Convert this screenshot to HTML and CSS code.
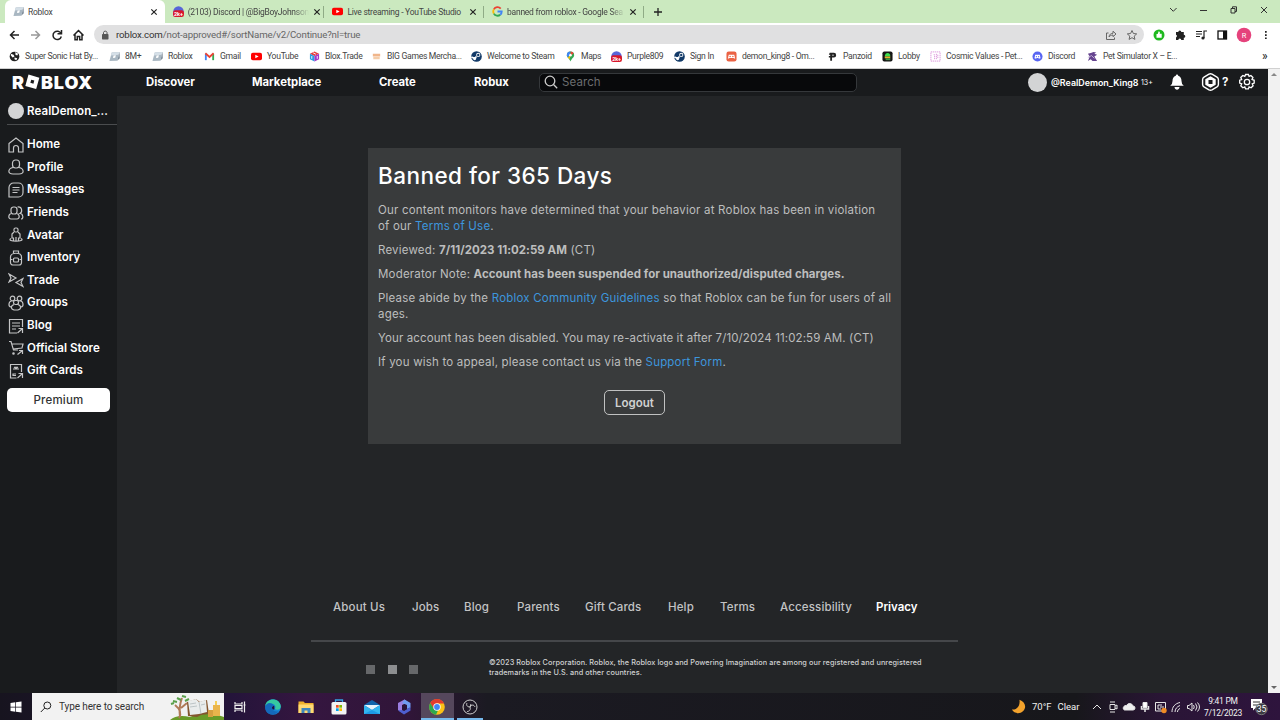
FILE: index.html
```
<!DOCTYPE html>
<html lang="en">
<head>
    <meta charset="utf-8">
    <title>Roblox</title>
    <link rel="stylesheet" href="styles.css">
</head>
<body>
    <!-- shared icons -->
    <svg class="defs">
        <defs>
            <symbol id="cube" viewBox="0 0 12 12"><path d="M3 1.5 11.5 1 9 10.5.5 11Z" fill="#a9b7c2"/><path d="M3 1.5 11.5 1 10.5 4 2 5Z" fill="#d5dfe7"/><path d="m5 5 2.5-.3-.7 2.6-2.5.2Z" fill="#fff"/><path d="m9 10.5 2.5-9.5.3 7Z" fill="#7d8b98"/></symbol>
            <symbol id="yt" viewBox="0 0 12 12"><rect y="1.8" width="12" height="8.4" rx="2" fill="#f00"/><path d="m4.7 4 3.6 2-3.6 2Z" fill="#fff"/></symbol>
            <symbol id="disc2k" viewBox="0 0 12 12"><circle cx="6" cy="6" r="5.7" fill="#5865d8"/><rect y="4.5" width="12" height="7.5" rx="2.5" fill="#d8162b"/><text x="6" y="10.4" font-size="6" font-weight="700" text-anchor="middle" fill="#fff">2k+</text></symbol>
            <symbol id="steam" viewBox="0 0 12 12"><circle cx="6" cy="6" r="5.8" fill="#123a68"/><path d="M.3 6.5 4 8 6 6" stroke="#fff" stroke-width="1.8" fill="none"/><circle cx="4" cy="8.3" r="1.7" fill="#fff"/><circle cx="7.9" cy="4.3" r="2.3" fill="#fff"/><circle cx="7.9" cy="4.3" r="1.3" fill="#123a68"/></symbol>
            <symbol id="x" viewBox="0 0 8 8"><path d="m1.3 1.3 5.4 5.4m0-5.4L1.3 6.7" stroke="#222" stroke-width="1.2"/></symbol>
        </defs>
    </svg>

    <div class="tabs">
        <div class="tab active"><svg><use href="#cube"/></svg><span>Roblox</span><svg class="x"><use href="#x"/></svg></div>
        <div class="tab sep"><svg><use href="#disc2k"/></svg><span class="fade">(2103) Discord | @BigBoyJohnson</span><svg class="x"><use href="#x"/></svg></div>
        <div class="tab sep"><svg><use href="#yt"/></svg><span>Live streaming - YouTube Studio</span><svg class="x"><use href="#x"/></svg></div>
        <div class="tab sep"><svg viewBox="0 0 12 12" fill="none" stroke-width="2"><path d="M9.5 2.8A4.6 4.6 0 0 0 2 3.7" stroke="#ea4335"/><path d="M2 3.7a4.6 4.6 0 0 0 0 4.6" stroke="#fbbc05"/><path d="M2 8.3a4.6 4.6 0 0 0 7 1.2" stroke="#34a853"/><path d="M9 9.5A4.5 4.5 0 0 0 10.6 6H6" stroke="#4285f4"/></svg><span class="fade">banned from roblox - Google Sea</span><svg class="x"><use href="#x"/></svg></div>
        <svg class="plus" viewBox="0 0 10 10"><path d="M5 1v8M1 5h8" stroke="#222" stroke-width="1.3"/></svg>
        <svg class="win" viewBox="0 0 104 10" fill="none" stroke="#333"><path d="m1 3 3.3 3.3L7.6 3"/><path d="M31 5.5h7"/><path d="M62 3.5h4V8h-4zM63.5 3V1.8h4V6.5H66"/><path d="m92 2 6 6m0-6-6 6"/></svg>
    </div>

    <div class="toolbar">
        <svg class="navs" viewBox="0 0 78 14" fill="none" stroke="#222" stroke-width="1.5"><path d="M10 7H1.5M5.5 3l-4 4 4 4"/><path d="M22 7h8.5M26.5 3l4 4-4 4" stroke="#999"/><path d="M52 5.5A4.2 4.2 0 1 0 52.3 8.5M52.5 2v3.8h-4"/><path d="m64.5 7.5 5-5 5 5M66 6.5v5.3h2.3V8.5h2.4v3.3H73V6.5"/></svg>
        <div class="url">
            <svg viewBox="0 0 10 12" class="lock"><rect x="2" y="5" width="6.5" height="5.5" rx=".7" fill="#555"/><path d="M3.5 5V3.5a1.8 1.8 0 0 1 3.5 0V5" fill="none" stroke="#555"/></svg>
            <span class="address">roblox.com<i>/not-approved#/sortName/v2/Continue?nl=true</i></span>
            <svg class="share" viewBox="0 0 34 12" fill="none" stroke="#666"><path d="M3.5 4H1.5v6.5h8V8.5M4 8c.3-2.7 2-3.7 4-3.7V2.2L11 5 8 7.7V6C6.3 6 5 6.6 4 8Z"/><path d="m27 1.5 1.4 3 3.3.4-2.5 2.2.7 3.3-2.9-1.7-2.9 1.7.7-3.3-2.5-2.2 3.3-.4Z"/></svg>
        </div>
        <svg class="exts" viewBox="0 0 122 16"><circle cx="9" cy="8" r="5.5" fill="#1fb91f"/><path d="M6.5 7h1.2l1-2.8 1.2.8-.2 1.7h2v4H6.5Z" fill="#fff"/><path d="M26 5h2.3a1.5 1.5 0 0 1 3 0h2.5v2.7a1.5 1.5 0 0 1 0 3V13h-2.5a1.5 1.5 0 0 0-3 0H26v-2.5a1.5 1.5 0 0 0 0-2.8Z" fill="#222"/><path d="M46 4.5h6M46 7h6M46 9.5h4M54 11V4h3" stroke="#222" stroke-width="1.2" fill="none"/><circle cx="53" cy="11" r="1.6" fill="#222"/><rect x="68" y="4" width="8.5" height="8" fill="none" stroke="#111" stroke-width="1.3"/><path d="M73 4h3.5v8H73z" fill="#111"/><circle cx="94" cy="8" r="7.3" fill="#e5427c"/><text x="94" y="10.7" font-size="7.5" text-anchor="middle" fill="#fff">R</text><path d="M115 4h1.7v1.7H115zm0 3.2h1.7v1.7H115zm0 3.2h1.7v1.7H115z" fill="#222"/></svg>
    </div>

    <div class="bookmarks">
        <div><svg viewBox="0 0 12 12"><circle cx="6" cy="6" r="5.3" fill="#222"/><path d="m2 3 3 1 1 2-2 1-2-2Zm5-2 3 2-1 2-2-1Zm-1 6 3 1-1 2-2-1Z" fill="#fff"/></svg>Super Sonic Hat By...</div>
        <div><svg><use href="#cube"/></svg>8M+</div>
        <div><svg><use href="#cube"/></svg>Roblox</div>
        <div><svg viewBox="0 0 12 12" fill="none" stroke-width="2"><path d="M2 10V3" stroke="#4285f4"/><path d="M10 10V3" stroke="#34a853"/><path d="m1.5 2.5 4.5 4 4.5-4" stroke="#ea4335"/></svg>Gmail</div>
        <div><svg><use href="#yt"/></svg>YouTube</div>
        <div><svg viewBox="0 0 12 12"><path d="m6 .5 5 2.5-5 2.5L1 3Z" fill="#e83d3d"/><path d="m1 3 5 2.5V11.5L1 9Z" fill="#2d9be0"/><path d="m11 3-5 2.5V11.5L11 9Z" fill="#a438c8"/><path d="m4.5 2 3 1.5M3 5.5v3M9 5.5v3" stroke="#fff"/></svg>Blox.Trade</div>
        <div><svg viewBox="0 0 12 12"><rect x="2" y="3" width="8" height="3" fill="#f0b58a"/><rect x="2.5" y="6.5" width="7" height="2.5" fill="#f5cda9"/></svg>BIG Games Mercha...</div>
        <div><svg><use href="#steam"/></svg>Welcome to Steam</div>
        <div><svg viewBox="0 0 12 12"><path d="M6 .5a4 4 0 0 1 4 4C10 7 7 8 6 11.5 5 8 2 7 2 4.5a4 4 0 0 1 4-4Z" fill="#34a853"/><path d="M2 4.5A4 4 0 0 1 6 .5l-1 4-2 2.5Z" fill="#4285f4"/><path d="M6 .5a4 4 0 0 1 3.5 2L6.5 5Z" fill="#ea4335"/><path d="m3 7 3-2.5L5 9Z" fill="#fbbc05"/><circle cx="6" cy="4.5" r="1.4" fill="#fff"/></svg>Maps</div>
        <div><svg><use href="#disc2k"/></svg>Purple809</div>
        <div><svg><use href="#steam"/></svg>Sign In</div>
        <div><svg viewBox="0 0 12 12"><rect x=".5" y=".5" width="11" height="11" rx="2.5" fill="#ea6244"/><path d="M2 8.5 3 4h6l1 4.5-2-.8H4Z" fill="#fff"/><circle cx="4.5" cy="6" r=".8" fill="#ea6244"/><circle cx="7.5" cy="6" r=".8" fill="#ea6244"/></svg>demon_king8 - Om...</div>
        <div><svg viewBox="0 0 12 12"><path d="M3 2h4.5a2.5 2.5 0 0 1 0 5H5.5v3.5H3.5V7H2V5.5h1.5V4H2Z" fill="#222"/><path d="M5.5 4h2v1h-2z" fill="#fff"/></svg>Panzoid</div>
        <div><svg viewBox="0 0 12 12"><rect x=".5" y=".5" width="11" height="11" rx="2" fill="#151515"/><path d="M3 6c0-5 6-5 6-1v1Z" fill="#3fe04e"/><path d="M3 6h6v2H3z" fill="#e8b22c"/><path d="M4 8h5v2H4z" fill="#3c9c45"/></svg>Lobby</div>
        <div><svg viewBox="0 0 12 12" fill="none" stroke="#dc94dc" stroke-dasharray="1.5 .7"><path d="M1 1h10v10H1zM4 4h1v5M7 3v6M8.5 4v4"/></svg>Cosmic Values - Pet...</div>
        <div><svg viewBox="0 0 12 12"><circle cx="6" cy="6" r="5.5" fill="#5865f2"/><path d="M2.7 8 3.5 4h5l.8 4-1.8.5-.5-.8H5l-.5.8Z" fill="#fff"/><circle cx="4.8" cy="6.2" r=".7" fill="#5865f2"/><circle cx="7.2" cy="6.2" r=".7" fill="#5865f2"/></svg>Discord</div>
        <div><svg viewBox="0 0 12 12"><path d="M1 3 5 2l2-1 3 .5L8 3l3 1-3 2 3 5H6L4 9l-3 2 2-5Z" fill="#65448f"/><path d="m1 7 4-2 3 3" stroke="#c5b4da" fill="none"/></svg>Pet Simulator X – E...</div>
        <div class="more">»</div>
    </div>

    <div class="page">
        <div class="site">
            <header>
                <div class="logo"><span>R</span><svg viewBox="0 0 13 14"><path d="m3 .5 9.5 2.8-2.8 9.9L.2 10.5Z" fill="#fff"/><path d="m5.4 5 2.7.7-.8 2.8-2.7-.8Z" fill="#191b1d"/></svg><span>BLOX</span></div>
                <nav><a>Discover</a><a>Marketplace</a><a>Create</a><a>Robux</a></nav>
                <div class="search"><svg viewBox="0 0 14 14" fill="none" stroke="#ccc" stroke-width="1.3"><circle cx="6" cy="6" r="4.8"/><path d="m9.5 9.5 3.7 3.7"/></svg>Search</div>
                <i class="avatar"></i>
                <b class="handle">@RealDemon_King8</b><span class="age">13+</span>
                <svg class="tools" viewBox="0 0 90 20"><path d="M10 2.5a1.2 1.2 0 0 1 1.2 1.2c2.3.8 3.3 2.5 3.3 5.3l.6 3 1.7 1.7H3.2L4.9 12l.6-3c0-2.8 1-4.5 3.3-5.3A1.2 1.2 0 0 1 10 2.5ZM7.5 15h5c-.3 3.5-4.7 3.5-5 0Z" fill="#fff"/><path d="M42 2.2q1.5-.8 3 0l5 2.9q1.4.9 1.4 2.5v4.8q0 1.6-1.4 2.5l-5 2.9q-1.5.8-3 0l-5-2.9q-1.4-.9-1.4-2.5V7.6q0-1.6 1.4-2.5Z" fill="none" stroke="#fff" stroke-width="1.4"/><path d="m43.5 4.3 5.2 3v5.4l-5.2 3-5.2-3V7.3ZM41.5 8v4h4V8Z" fill="#fff" fill-rule="evenodd"/><text x="55" y="13.5" font-size="11.5" font-weight="700" fill="#fff">?</text><g fill="none" stroke="#fff" stroke-width="1.3"><circle cx="80" cy="10" r="2.7"/><path d="m78.6 2.5h2.8l.7 1.9 1.8-.9 2 2-.9 1.9 2.2.9v2.8l-2 .7.9 2-2 2-2-.9-.7 2h-2.8l-.8-2-2 .9-2-2 .9-2-2-.8v-2.8l2-.7-.9-2 2-2 2 .9Z"/></g></svg>
            </header>
            <div class="columns">
                <aside>
                    <div class="user"><i class="avatar"></i>RealDemon_...</div>
                    <ul>
                        <li><svg viewBox="0 0 16 16"><path d="M1 6.5 8 1l7 5.5V15h-4.5v-4a2.5 2.5 0 0 0-5 0v4H1Z"/></svg>Home</li>
                        <li><svg viewBox="0 0 16 16"><rect x="4.5" y="1" width="7" height="8" rx="3"/><path d="M5 8.5c-5 1-6 6.5 0 6.5h6c6 0 5-5.5 0-6.5"/></svg>Profile</li>
                        <li><svg viewBox="0 0 16 16"><path d="M1 15V5.5A4.5 4.5 0 0 1 5.5 1h5A4.5 4.5 0 0 1 15 5.5v5a4.5 4.5 0 0 1-4.5 4.5ZM4.5 5.5h7M4.5 8h7M4.5 10.5h5"/></svg>Messages</li>
                        <li><svg viewBox="0 0 16 16"><rect x="3" y="2" width="6" height="7" rx="2.5"/><path d="M3.5 8.5C0 9 0 14 3 14h6c3 0 3-5-.5-5.5M9.5 2c5-.5 5 5 2.5 6.5 3 0 4 5.5 1 5.5"/></svg>Friends</li>
                        <li><svg viewBox="0 0 16 16"><rect x="6" y="1" width="4" height="4" rx="1.5"/><path d="M6 5 4 7v4h1.5v3h5v-3H12V7l-2-2M8 10v4M3 11.5c-6 3.5 16 3.5 10 0"/></svg>Avatar</li>
                        <li><svg viewBox="0 0 16 16"><path d="M5.5 3V1h5v2M2.5 7c0-5 11-5 11 0v5.5a2.5 2.5 0 0 1-2.5 2.5H5a2.5 2.5 0 0 1-2.5-2.5ZM2 9.5h2.5m7 0H14"/><rect x="5.5" y="8" width="5" height="4" rx="1"/></svg>Inventory</li>
                        <li><svg viewBox="0 0 16 16"><path d="m1 2 7 4-7 4 2-4ZM15 6.5l-7 4 7 4-2-4Z"/></svg>Trade</li>
                        <li><svg viewBox="0 0 16 16"><circle cx="4.5" cy="3.5" r="2.3"/><circle cx="11.5" cy="3.5" r="2.3"/><rect x="5.5" y="5.5" width="5" height="4" rx="2"/><path d="M3.5 6c-3 .5-3.5 5.5-.5 6M12.5 6c3 .5 3.5 5.5.5 6M6 9.5c-4 1.5-3.5 5.5 2 5.5s6-4 2-5.5"/></svg>Groups</li>
                        <li><svg viewBox="0 0 16 16"><path d="M9 15H1.5V1.5h13V9M4 5h8M4 8h8M4 11h4M9.5 15l5-4.5M10.5 10.5h4V15"/></svg>Blog</li>
                        <li><svg viewBox="0 0 16 16"><path d="M1 1.5h2L5.5 10H10M4 4h11l-1 4-9 1M9.5 14.5l5-4M11 10.5h3.5V14"/><circle cx="5.5" cy="13.5" r=".7"/></svg>Official Store</li>
                        <li><svg viewBox="0 0 16 16"><path d="M8.5 15h-6V1.5h11V9M5 6h6M8 3.5V6M6 4l2 1.5L10 4M8 11H5v1.5h3M9.5 15l5-4.5M10.5 10.5h4V15"/></svg>Gift Cards</li>
                    </ul>
                    <button class="premium">Premium</button>
                </aside>
                <main>
                    <section class="notice">
                        <h1>Banned for 365 Days</h1>
                        <p>Our content monitors have determined that your behavior at Roblox has been in violation<br>of our <a>Terms of Use</a>.</p>
                        <p>Reviewed: <b>7/11/2023 11:02:59 AM</b> (CT)</p>
                        <p>Moderator Note: <b>Account has been suspended for unauthorized/disputed charges.</b></p>
                        <p>Please abide by the <a>Roblox Community Guidelines</a> so that Roblox can be fun for users of all<br>ages.</p>
                        <p class="tight">Your account has been disabled. You may re-activate it after 7/10/2024 11:02:59 AM. (CT)</p>
                        <p>If you wish to appeal, please contact us via the <a>Support Form</a>.</p>
                        <button class="logout">Logout</button>
                    </section>
                    <footer>
                        <nav><a>About Us</a><a>Jobs</a><a>Blog</a><a>Parents</a><a>Gift Cards</a><a>Help</a><a>Terms</a><a>Accessibility</a><a class="privacy">Privacy</a></nav>
                        <div class="legal">
                            <div class="dots"><i></i><i></i><i></i></div>
                            <p>©2023 Roblox Corporation. Roblox, the Roblox logo and Powering Imagination are among our registered and unregistered<br>trademarks in the U.S. and other countries.</p>
                        </div>
                    </footer>
                </main>
            </div>
        </div>
        <div class="scrollbar"><span class="up"></span><span class="down"></span></div>
    </div>

    <div class="taskbar">
        <svg class="start" viewBox="0 0 12 12"><path d="m.5 2 4.8-.7v4.4H.5ZM6 1.2 11.5.5v5.2H6ZM.5 6.4h4.8v4.4L.5 10ZM6 6.4h5.5v5.2L6 10.8Z" fill="#fff"/></svg>
        <div class="find">
            <svg class="glass" viewBox="0 0 12 12" fill="none" stroke="#222"><circle cx="7.3" cy="4.5" r="3.5"/><path d="M4.8 7 .8 11"/></svg>
            <span>Type here to search</span>
            <svg class="scene" viewBox="0 0 54 27"><path d="M0 27q7-6 20-3 15-7 34 0v3Z" fill="#6a9b28"/><path d="M9 25c3-5 1-9-4-13M10 24c-1-8 0-14 2-19M11 15l6-5" stroke="#b07a57" stroke-width="2" fill="none"/><path d="m1 11 3-1M3 8l4 1M7 5l4 2M12 3l4 1M15 8l4-2" stroke="#5aa04b" stroke-width="2"/><path d="m17 9 9-3 4 3 7-2 2 14-8 1-4 2-9-1Z" fill="#83552e"/><path d="m18 8 8-2 3 3 7-2 1 12-8 2-9 1Z" fill="#e9ecec"/><path d="m29 9 2 12M20 11l6-1M20 14l7-1M31 12l4-1" stroke="#a9b3b6" stroke-width=".7"/><rect x="43" y="12" width="7" height="11" fill="#eab54c"/><rect x="38" y="17" width="5" height="7" fill="#d6a040"/><path d="M46 12V8" stroke="#f4ce55" stroke-width="2"/></svg>
        </div>
        <div class="apps">
            <span><svg viewBox="0 0 16 16" fill="none" stroke="#eee" stroke-width="1.2"><path d="M3 3v2h7V3M3 13v-2h7v2M3 6.5h7v3H3zM12.5 2.5v11M11.5 6h2"/></svg></span>
            <span><svg viewBox="0 0 16 16"><circle cx="8" cy="8" r="7.8" fill="#1784d3"/><path d="M.2 7C1-1 14-2 15.8 7c.2 4-4 4.5-6 3 2-3-1-6-4-5C3 5 1 6 .2 7Z" fill="#36c9a0"/><path d="M.2 8C1 3 8 3 8.5 7 6 8 7 13 13.5 12.5 10 17 0 17 .2 8Z" fill="#1469bb"/><path d="M9 6.5c1 2-.3 2.5.6 3.5-1 1.5-3 0-2.5-2Z" fill="#24113a"/></svg></span>
            <span><svg viewBox="0 0 16 16"><path d="M.5 2.5h5l1.5 1.5h8.5v10H.5Z" fill="#efb12c"/><path d="M.5 5.5h15v8.5H.5Z" fill="#ffda74"/><path d="M3.5 14V9h9v5h-3v-2.5h-3V14Z" fill="#3e87bd"/></svg></span>
            <span><svg viewBox="0 0 16 16"><path d="M4.5 4V1h7v3" fill="none" stroke="#35a4e4" stroke-width="1.3"/><rect x=".5" y="3" width="15" height="12.5" rx="1.5" fill="#f3f3f3"/><path d="M5 6h2.7v2.7H5Z" fill="#f25022"/><path d="M8.3 6H11v2.7H8.3Z" fill="#7fba00"/><path d="M5 9.3h2.7V12H5Z" fill="#00a4ef"/><path d="M8.3 9.3H11V12H8.3Z" fill="#ffb900"/></svg></span>
            <span><svg viewBox="0 0 16 16"><path d="M0 6 8 1l8 5v9H0Z" fill="#1264ab"/><path d="M0 6h16l-8 5Z" fill="#e7f3fb"/><path d="m0 6 8 5 8-5v9H0Z" fill="#33b6f0"/><path d="m8 11 8 4H0Z" fill="#1c9ae6"/></svg></span>
            <span><svg viewBox="0 0 16 16"><path d="M8.5.5 2 4v7l4 2.5V6l6-2.5Z" fill="#9a7de0"/><path d="m8.5.5 6 3.5v4.5L11 10V6L6 4Z" fill="#6f9bf0"/><path d="M14.5 8v3.5L8 15.5 2 11.5l4-.5 2 1Z" fill="#4e5fd0"/><path d="m8.3 5.2 2.7 1.6v3l-2.7 1.6L6 9.8v-3Z" fill="#291438"/></svg></span>
            <span class="current"><svg viewBox="0 0 16 16"><circle cx="8" cy="8" r="7.8" fill="#fbc116"/><path d="M1.2 4A7.8 7.8 0 0 1 15 4.5H8L4.5 10Z" fill="#e33b2e"/><path d="M1.2 4 5 10l4 1.5-2 4.2A7.8 7.8 0 0 1 1.2 4Z" fill="#2da94f"/><circle cx="8" cy="8" r="3.7" fill="#fff"/><circle cx="8" cy="8" r="2.9" fill="#4285f4"/></svg></span>
            <span class="open"><svg viewBox="0 0 16 16" fill="none" stroke="#ccc"><circle cx="8" cy="8" r="7"/><path d="M8 8c-3 0-4-2-3-4M8 8c1.5-2.5 4-2.5 5 0M8 8c1 2.5-.5 4.5-3 4.5M8 8l1-3"/></svg></span>
        </div>
        <div class="weather"><svg viewBox="0 0 16 16"><path d="M9 .8c6 2 8 8 4 12-4 4-10 2.5-12-1.5 6 .5 9-5 8-10.5Z" fill="#f2a22c"/></svg><span>70°F</span><span>Clear</span></div>
        <svg class="tray" viewBox="0 0 112 16" fill="none" stroke="#e6e6e6"><path d="m2 10 4-4 4 4"/><path d="M19 5.5h5v5h-5zM24 7l2-1v4l-2-1M19 3h5M19 13h5"/><path d="M33.5 11h8.5a2 2 0 0 0 0-4 3.5 3.5 0 0 0-6.5-.5c-3-.5-4.5 3.5-2 4.5Z" fill="#eee"/><path d="M52 3.5h4v5h-4z" fill="#fff"/><path d="M50.5 7v3h7V7M54 10v3" stroke-width="1.5"/><path d="M64.5 3.5h10v8.5h-10zM67 6h4M67 6v4h3M69 8h4"/><circle cx="73" cy="11.5" r="2.7" fill="#f08a24" stroke="none"/><path d="M81 13c0-5 3-8.5 8-9.5M84 13c0-3 2-5.5 5-6.5M86.5 13c0-1.5 1-3 2.5-3.5"/><path d="M96.5 6.5H98L101 4v8L98 9.5h-1.5ZM102.5 6q1.5 2 0 4M104.5 4.5q3 3.5 0 7M106.5 3.5q4 4.5 0 9"/></svg>
        <div class="clock">9:41 PM<br>7/12/2023</div>
        <svg class="alerts" viewBox="0 0 22 20"><path d="M2 2h11v9H6.5L4 13.5V11H2Z" fill="#fff"/><path d="M4 5h7M4 8h7" stroke="#333"/><circle cx="12.5" cy="12" r="5.7" fill="#3b3b42" stroke="#777"/><text x="12.5" y="15" font-size="8.5" text-anchor="middle" fill="#fff">35</text></svg>
    </div>
</body>
</html>
```
FILE: styles.css
```
* {
    box-sizing: border-box;
}

body {
    margin: 0;
    width: 1280px;
    height: 720px;
    overflow: hidden;
    display: flex;
    flex-direction: column;
    background: #fff;
    font-family: Roboto, "Open Sans", sans-serif;
    font-size: 9px;
    color: #444;
}

svg {
    flex: none;
    display: block;
}

.defs {
    width: 0;
    height: 0;
    position: absolute;
}

/* browser chrome */
.tabs {
    flex: none;
    height: 23px;
    padding-left: 5px;
    display: flex;
    align-items: center;
    background: #cbe9bf;
}

.tab {
    flex: none;
    width: 159.7px;
    height: 23px;
    padding: 0 7px 0 8px;
    display: flex;
    align-items: center;
    gap: 4px;
}

.tab svg {
    width: 11px;
    height: 11px;
}

.tab span {
    flex: 1;
    white-space: nowrap;
    font-size: 8.5px;
    letter-spacing: -.25px;
}

.tab .fade {
    -webkit-mask-image: linear-gradient(to right, #000 88%, transparent);
    mask-image: linear-gradient(to right, #000 88%, transparent);
}

.tab .x {
    width: 8px;
    height: 8px;
}

.active {
    background: #fff;
    border-radius: 6px 6px 0 0;
}

.sep {
    background: linear-gradient(#8fab86, #8fab86) no-repeat right center / 1px 12px;
}

.plus {
    width: 10px;
    height: 10px;
    margin-left: 9px;
}

.win {
    width: 104px;
    height: 10px;
    margin: -4px 7px 0 auto;
}

.toolbar {
    flex: none;
    height: 22px;
    display: flex;
    align-items: center;
    padding-top: 1px;
}

.navs {
    width: 78px;
    height: 14px;
    margin: 0 7px 0 9px;
}

.url {
    width: 1050px;
    height: 19px;
    border-radius: 10px;
    background: #e0e0e1;
    display: flex;
    align-items: center;
    padding: 0 5px 0 6px;
    font-size: 9.7px;
    letter-spacing: -.17px;
}

.lock {
    width: 10px;
    height: 12px;
}

.address {
    margin-left: 6px;
    color: #333;
}

.address i {
    font-style: normal;
    color: #666;
}

.share {
    width: 34px;
    height: 12px;
    margin-left: auto;
}

.exts {
    width: 122px;
    height: 16px;
    margin-left: 6px;
}

.bookmarks {
    flex: none;
    height: 24px;
    padding: 0 0 1px 9px;
    border-bottom: 1px solid #d0d0d0;
    display: grid;
    grid-template-columns: 100px 43px 52px 47px 58px 62px 100px 94px 46px 63px 52px 101px 55px 48px 102px 55px 175px 10px;
    align-items: center;
    font-size: 8.6px;
    letter-spacing: -.3px;
    white-space: nowrap;
}

.bookmarks div {
    display: flex;
    align-items: center;
    gap: 5px;
}

.bookmarks svg {
    width: 11px;
    height: 11px;
}

.bookmarks .more {
    font-size: 12px;
    color: #111;
}

/* site */
.page {
    flex: none;
    height: 624px;
    display: flex;
    font-family: Inter, sans-serif;
    color: #fff;
}

.site {
    width: 1268px;
    display: flex;
    flex-direction: column;
    background: #232527;
}

header {
    height: 27px;
    flex: none;
    display: flex;
    align-items: center;
    padding-bottom: 1px;
    background: #191b1d;
}

.logo {
    width: 134px;
    padding-left: 12px;
    display: flex;
    align-items: center;
    font-size: 18px;
    font-weight: 900;
    letter-spacing: .9px;
}

.logo svg {
    width: 15px;
    height: 16px;
    margin-right: 1px;
}

header nav {
    margin-left: 12px;
    width: 393px;
    display: grid;
    grid-template-columns: 106px 127px 95px 1fr;
    font-size: 11.3px;
    font-weight: 700;
}

.search {
    width: 318px;
    height: 19px;
    border: 1px solid #35383b;
    border-radius: 5px;
    background: #08090b;
    display: flex;
    align-items: center;
    gap: 4px;
    padding-left: 4px;
    font-size: 11.5px;
    letter-spacing: .1px;
    color: #6b6d6f;
}

.search svg {
    width: 14px;
    height: 14px;
}

.avatar {
    flex: none;
    width: 19px;
    height: 19px;
    border-radius: 50%;
    background: #d3d4d5;
}

header .avatar {
    margin: 0 4px 0 171px;
}

.handle {
    width: 90px;
    font-size: 8.9px;
    font-weight: 600;
}

.age {
    width: 26px;
    font-size: 7px;
}

.tools {
    width: 90px;
    height: 20px;
}

.columns {
    flex: 1;
    display: flex;
}

aside {
    width: 117px;
    padding: 6px 0 0 7px;
    background: #191b1d;
}

.user {
    height: 23px;
    display: flex;
    align-items: center;
    gap: 3px;
    padding: 0 0 4px 1px;
    border-bottom: 1px solid #4a4c4e;
    font-size: 11.5px;
    font-weight: 600;
    letter-spacing: .1px;
}

.user .avatar {
    width: 16px;
    height: 16px;
}

aside ul {
    margin: 8px 0 6px;
    padding: 0;
    list-style: none;
    font-size: 11.6px;
    font-weight: 600;
}

aside li {
    height: 22.6px;
    display: flex;
    align-items: center;
    gap: 3px;
    padding-left: 1px;
    white-space: nowrap;
}

aside li svg {
    width: 16px;
    height: 16px;
    margin-top: 1px;
    fill: none;
    stroke: #c4c5c6;
    stroke-width: 1.2;
}

button {
    display: block;
    padding: 0;
    font-family: inherit;
    font-size: 11.5px;
}

.premium {
    width: 103px;
    height: 24px;
    border: 0;
    border-radius: 5px;
    background: #fff;
    color: #303234;
    font-weight: 500;
    letter-spacing: .2px;
}

main {
    flex: 1;
    display: flex;
    flex-direction: column;
}

.notice {
    width: 533px;
    height: 296px;
    margin: 52px 0 0 251px;
    padding: 14px 0 0 10px;
    background: #393b3c;
    font-size: 11.5px;
    line-height: 16px;
    letter-spacing: .2px;
    color: #bdbebe;
    white-space: nowrap;
}

.notice h1 {
    margin: 0 0 13px;
    padding-top: 1px;
    font-size: 22.5px;
    line-height: 26px;
    font-weight: 500;
    letter-spacing: .45px;
    color: #fff;
}

.notice p {
    margin: 0 0 8px;
}

.notice b {
    letter-spacing: .03px;
}

.notice .tight {
    letter-spacing: .11px;
}

.notice a {
    color: #3d96dc;
}

.logout {
    width: 61px;
    height: 25px;
    margin: 20px 0 0 226px;
    border: 1px solid #c0c1c1;
    border-radius: 5px;
    background: none;
    color: #d0d1d1;
    font-weight: 600;
}

footer {
    margin-top: 155px;
}

footer nav {
    height: 16px;
    margin-left: 216px;
    display: grid;
    grid-template-columns: 79px 52px 53px 68px 83px 52px 60px 96px 42px;
    align-items: center;
    font-size: 11.5px;
    font-weight: 500;
    letter-spacing: .15px;
    color: #c2c3c4;
    white-space: nowrap;
}

footer .privacy {
    color: #fff;
    font-weight: 600;
    letter-spacing: 0;
}

.legal {
    width: 647px;
    margin: 25px 0 0 194px;
    padding: 16px 0 0 55px;
    border-top: 2px solid #45474a;
    display: flex;
}

.dots {
    width: 123px;
    padding-top: 7px;
    display: flex;
    gap: 12.5px;
}

.dots i {
    width: 9px;
    height: 9px;
    background: #66686a;
}

.dots i:nth-child(2) {
    background: #8c8e90;
}

.legal p {
    margin: 0;
    font-size: 7.3px;
    line-height: 10px;
    font-weight: 500;
    letter-spacing: .08px;
    color: #d0d1d2;
    white-space: nowrap;
}

.scrollbar {
    width: 12px;
    padding: 4px 3px;
    display: flex;
    flex-direction: column;
    justify-content: space-between;
    background: #f1f1f1;
}

.scrollbar span {
    border: 3px solid transparent;
}

.scrollbar .up {
    border-top-width: 0;
    border-bottom-color: #888;
}

.scrollbar .down {
    border-bottom-width: 0;
    border-top-color: #666;
}

/* windows taskbar */
.taskbar {
    flex: none;
    height: 27px;
    display: flex;
    align-items: center;
    background: linear-gradient(to right, #17141f, #24143a 18%, #351640 24%, #301538 32%, #1b1a22 38%, #17171b 84%, #2a1536 91%, #2e143d);
    color: #f2f2f2;
    font-size: 9.5px;
}

.start {
    width: 12px;
    height: 12px;
    margin: 0 10px;
}

.find {
    width: 192px;
    height: 27px;
    display: flex;
    align-items: center;
    background: #f2f2f2;
    color: #333;
    font-size: 10px;
    letter-spacing: -.1px;
}

.glass {
    width: 12px;
    height: 12px;
    margin: 0 7px 0 8px;
}

.scene {
    width: 54px;
    height: 27px;
    margin-left: auto;
}

.apps {
    display: flex;
    height: 27px;
}

.apps span {
    width: 32.8px;
    display: flex;
    align-items: center;
    justify-content: center;
}

.apps svg {
    width: 16px;
    height: 16px;
}

.apps .current {
    background: #55475c;
    border-bottom: 2px solid #76b9ed;
    padding-top: 2px;
}

.apps .open {
    background: linear-gradient(#76b9ed, #76b9ed) no-repeat center bottom / 26px 2px;
}

.weather {
    display: flex;
    align-items: center;
    gap: 6px;
    margin-left: auto;
    width: 80px;
}

.weather svg {
    width: 15px;
    height: 15px;
}

.tray {
    width: 112px;
    height: 16px;
}

.clock {
    width: 40px;
    text-align: center;
    font-size: 8.5px;
    line-height: 12px;
    letter-spacing: -.25px;
}

.alerts {
    width: 22px;
    height: 20px;
    margin: 0 9px 0 6px;
}
```
